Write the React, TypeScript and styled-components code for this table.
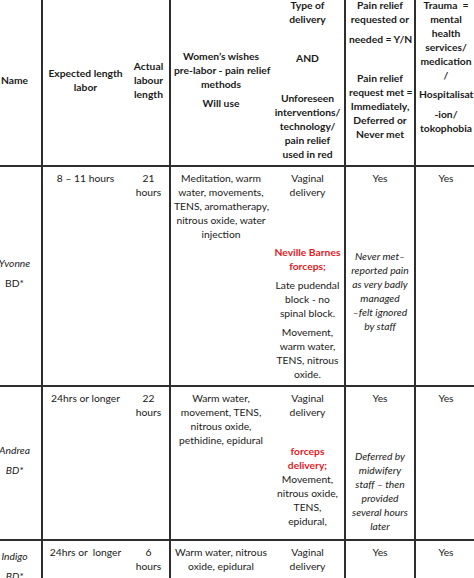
import React from 'react';
import styled, { createGlobalStyle } from 'styled-components';

type Tone = 'plain' | 'bold' | 'italic' | 'red';

interface Para {
	lines: string[];
	gap?: number;
	tone?: Tone;
}

interface CellData {
	paras: Para[];
	align?: 'top' | 'middle';
	lift?: number;
}

interface RowData {
	height: number;
	head?: boolean;
	cells: CellData[];
}

// column widths and which columns carry a right-hand rule
const columns = [
	{ width: 54, divider: true },
	{ width: 86, divider: false },
	{ width: 42, divider: true },
	{ width: 101, divider: false },
	{ width: 74, divider: true },
	{ width: 70, divider: true },
	{ width: 62, divider: true },
];

const p = (lines: string[], gap = 0, tone: Tone = 'plain'): Para => ({ lines, gap, tone });

const rows: RowData[] = [
	{
		height: 165,
		head: true,
		cells: [
			{ align: 'middle', paras: [p(['Name'])] },
			{ align: 'middle', paras: [p(['Expected length', 'labor'])] },
			{ align: 'middle', paras: [p(['Actual', 'labour', 'length'])] },
			{
				align: 'middle',
				paras: [p(['Women’s wishes', 'pre-labor - pain relief', 'methods']), p(['Will use'], 5)],
			},
			{
				paras: [
					p(['Type of', 'delivery']),
					p(['AND'], 25),
					p(['Unforeseen', 'interventions/', 'technology/', 'pain relief', 'used in red'], 26),
				],
			},
			{
				paras: [
					p(['Pain relief', 'requested or']),
					p(['needed = Y/N'], 6),
					p(['Pain relief', 'request met =', 'Immediately,', 'Deferred or', 'Never met'], 25),
				],
			},
			{
				paras: [
					p(['Trauma\u00a0 =', 'mental', 'health', 'services/', 'medication', '/']),
					p(['Hospitalisat'], 5),
					p(['-ion/', 'tokophobia'], 6),
				],
			},
		],
	},
	{
		height: 220,
		cells: [
			{ align: 'middle', lift: 6, paras: [p(['Yvonne'], 0, 'italic'), p(['BD*'], 6)] },
			{ paras: [p(['8 – 11 hours'])] },
			{ paras: [p(['21', 'hours'])] },
			{
				paras: [
					p(['Meditation, warm', 'water, movements,', 'TENS, aromatherapy,', 'nitrous oxide, water', 'injection']),
				],
			},
			{
				paras: [
					p(['Vaginal', 'delivery']),
					p(['Neville Barnes', 'forceps;'], 46, 'red'),
					p(['Late pudendal', 'block - no', 'spinal block.'], 5),
					p(['Movement,', 'warm water,', 'TENS, nitrous', 'oxide.'], 5),
				],
			},
			{
				paras: [
					p(['Yes']),
					p(['Never met–', 'reported pain', 'as very badly', 'managed', '–felt ignored', 'by staff'], 64, 'italic'),
				],
			},
			{ paras: [p(['Yes'])] },
		],
	},
	{
		height: 154,
		cells: [
			{ align: 'middle', lift: 6, paras: [p(['Andrea'], 0, 'italic'), p(['BD*'], 6, 'italic')] },
			{ paras: [p(['24hrs or longer'])] },
			{ paras: [p(['22', 'hours'])] },
			{ paras: [p(['Warm water,', 'movement, TENS,', 'nitrous oxide,', 'pethidine, epidural'])] },
			{
				paras: [
					p(['Vaginal', 'delivery']),
					p(['forceps', 'delivery;'], 25, 'red'),
					p(['Movement,', 'nitrous oxide,', 'TENS,', 'epidural,']),
				],
			},
			{
				paras: [
					p(['Yes']),
					p(['Deferred by', 'midwifery', 'staff – then', 'provided', 'several hours', 'later'], 44, 'italic'),
				],
			},
			{ paras: [p(['Yes'])] },
		],
	},
	{
		height: 58,
		cells: [
			{ align: 'middle', lift: 6, paras: [p(['Indigo'], 0, 'italic'), p(['BD*'], 6, 'italic')] },
			{ paras: [p(['24hrs or\u00a0 longer'])] },
			{ paras: [p(['6', 'hours'])] },
			{ paras: [p(['Warm water, nitrous', 'oxide, epidural'])] },
			{ paras: [p(['Vaginal', 'delivery'])] },
			{ paras: [p(['Yes'])] },
			{ paras: [p(['Yes'])] },
		],
	},
];

const App = () => {
	return (
		<>
			<GlobalStyle />
			<Page>
				<Sheet>
					<colgroup>
						{columns.map((c, i) => (
							<Col key={i} $w={c.width} />
						))}
					</colgroup>
					<tbody>
						{rows.map((row, r) => (
							<Row key={r} $h={row.height}>
								{row.cells.map((cell, c) => (
									<Cell
										key={c}
										$head={!!row.head}
										$divider={columns[c].divider}
										$align={cell.align || 'top'}
										$lift={cell.lift || 0}
									>
										{cell.paras.map((para, k) => (
											<Paragraph key={k} $gap={para.gap || 0} $tone={para.tone || 'plain'}>
												{para.lines.map((line, l) => (
													<React.Fragment key={l}>
														{l > 0 && <br />}
														{line}
													</React.Fragment>
												))}
											</Paragraph>
										))}
									</Cell>
								))}
							</Row>
						))}
					</tbody>
				</Sheet>
			</Page>
		</>
	);
};

export default App;

const GlobalStyle = createGlobalStyle`
	html, body {
		margin: 0;
		padding: 0;
		background: #ffffff;
	}
	body {
		font-family: Lato, "Liberation Sans", sans-serif;
	}
`;

const Page = styled.div({
	width: '474px',
	height: '578px',
	overflow: 'hidden',
	background: '#ffffff',
});

const Sheet = styled.table({
	tableLayout: 'fixed',
	borderCollapse: 'collapse',
	width: '489px',
	margin: '-6px 0 0 -12px',
	fontSize: '10.3px',
	lineHeight: '14px',
	color: '#1a1a1a',
});

const Col = styled.col<{ $w: number }>(({ $w }) => ({
	width: `${$w}px`,
}));

const Row = styled.tr<{ $h: number }>(({ $h }) => ({
	height: `${$h}px`,
}));

const Cell = styled.td<{ $head: boolean; $divider: boolean; $align: string; $lift: number }>(
	({ $head, $divider, $align, $lift }) => ({
		padding: `4px 3px ${4 + $lift}px`,
		verticalAlign: $align,
		textAlign: 'center',
		whiteSpace: 'nowrap',
		fontWeight: $head ? 700 : 400,
		borderBottom: '2px solid #2e2e2e',
		borderRight: $divider ? '2px solid #2e2e2e' : 'none',
	})
);

const Paragraph = styled.div<{ $gap: number; $tone: Tone }>(({ $gap, $tone }) => ({
	marginTop: `${$gap}px`,
	fontStyle: $tone === 'italic' ? 'italic' : 'normal',
	fontWeight: $tone === 'red' ? 700 : 'inherit',
	color: $tone === 'red' ? '#e3191f' : 'inherit',
}));
